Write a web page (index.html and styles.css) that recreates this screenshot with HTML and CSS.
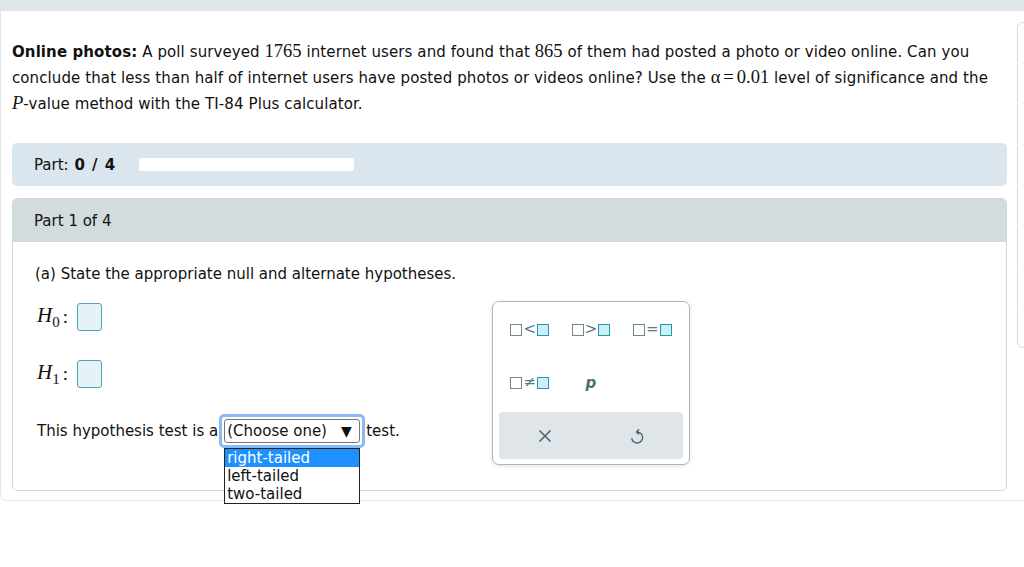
FILE: index.html
```html
<!DOCTYPE html>
<html>
<head>
<meta charset="utf-8">
<link rel="stylesheet" href="styles.css">
</head>
<body>
<div class="topbar"></div>
<div class="page">
  <div class="main">
    <p class="question"><b>Online photos:</b> A poll surveyed <span class="m">1765</span> internet users and found that <span class="m">865</span> of them had posted a photo or video online. Can you conclude that less than half of internet users have posted photos or videos online? Use the <span class="m">α<span class="eq">=</span>0.01</span> level of significance and the <span class="m i">P</span>-value method with the TI-84 Plus calculator.</p>

    <div class="partbar">
      <span>Part: <b>0 / 4</b></span>
      <div class="progress"></div>
    </div>

    <div class="partbox">
      <div class="parthead">Part 1 of 4</div>
      <div class="partbody">
        <div class="work">
          <p class="prompt">(a) State the appropriate null and alternate hypotheses.</p>
          <div class="hrow"><span class="hlabel"><span class="i">H</span><sub>0</sub></span><span class="colon">:</span><span class="ansbox"></span></div>
          <div class="hrow"><span class="hlabel"><span class="i">H</span><sub>1</sub></span><span class="colon">:</span><span class="ansbox"></span></div>
          <div class="testrow">
            <span>This hypothesis test is a</span>
            <span class="selectwrap">
              <span class="select">(Choose one) <span class="arrow">▼</span></span>
              <span class="options">
                <span class="opt sel">right-tailed</span>
                <span class="opt">left-tailed</span>
                <span class="opt">two-tailed</span>
              </span>
            </span>
            <span>test.</span>
          </div>
        </div>
        <div class="palette">
          <div class="keys">
            <span class="key"><span class="sq"></span><span class="op">&lt;</span><span class="sq f"></span></span>
            <span class="key"><span class="sq"></span><span class="op">&gt;</span><span class="sq f"></span></span>
            <span class="key"><span class="sq"></span><span class="op">=</span><span class="sq f"></span></span>
            <span class="key"><span class="sq"></span><span class="op">≠</span><span class="sq f"></span></span>
            <span class="key p">p</span>
            <span class="key"></span>
          </div>
          <div class="actions">
            <svg width="16" height="16" viewBox="0 0 16 16"><path d="M2.5 2.5 L13.5 13.5 M13.5 2.5 L2.5 13.5" stroke="#4b6570" stroke-width="1.6" fill="none"/></svg>
            <svg width="18" height="18" viewBox="0 0 18 18"><path d="M9 5 A5.5 5.5 0 1 1 3.7 11.2" stroke="#4b6570" stroke-width="1.4" fill="none"/><path d="M11 2.3 L8.5 5 L11 7.6" stroke="#4b6570" stroke-width="1.4" fill="none"/></svg>
          </div>
        </div>
      </div>
    </div>
  </div>
  <div class="side">
    <div></div><div></div><div></div><div></div><div></div><div></div><div></div><div></div>
  </div>
</div>
</body>
</html>
```
FILE: styles.css
```css
html, body { margin: 0; padding: 0; background: #fff; overflow: hidden; }
body { font-family: "DejaVu Sans", Verdana, sans-serif; font-size: 15px; color: #111; width: 1024px; height: 567px; }
.topbar { height: 11px; background: #dfe6e9; }
.page { display: flex; width: 1060px; height: 490px; border-left: 1px solid #e4e9eb; border-bottom: 1px solid #e4e9eb; border-bottom-left-radius: 6px; box-sizing: border-box; }
.main { width: 995px; padding-left: 11px; flex: none; }
.question { margin: 28px 0 0 0; line-height: 26px; width: 988px; letter-spacing: 0.1px; }
.m { font-family: "Liberation Serif", "DejaVu Serif", serif; font-size: 18.5px; line-height: 1; letter-spacing: 0; }
.i { font-style: italic; font-family: "Liberation Serif", serif; }
.eq { margin: 0 3px; }
.partbar { margin-top: 26px; height: 43px; background: #dae5ee; border-radius: 5px; display: flex; align-items: center; padding-left: 22px; }
.partbar b { font-weight: bold; word-spacing: 2px; margin-left: 1px; }
.progress { width: 215px; height: 13px; background: #fff; border-radius: 3px; margin-left: 24px; }
.partbox { margin-top: 12px; height: 293px; border: 1px solid #cdd8dc; border-radius: 5px; box-sizing: border-box; overflow: visible; }
.parthead { height: 43px; background: #d2dbde; display: flex; align-items: center; padding-left: 21px; border-radius: 4px 4px 0 0; }
.partbody { display: flex; }
.work { width: 457px; padding-left: 22px; flex: none; }
.prompt { margin: 22px 0 0 0; line-height: 20px; }
.hrow { display: flex; align-items: center; height: 30px; margin-top: 18px; }
.hrow + .hrow { margin-top: 27px; }
.hlabel { font-family: "Liberation Serif", serif; font-size: 21px; margin-left: 2px; line-height: 1; }
.hlabel sub { font-size: 15px; font-style: normal; vertical-align: -5px; }
.colon { font-family: "Liberation Serif", serif; font-size: 19px; margin-left: 3px; }
.ansbox { width: 23px; height: 26px; border: 1.5px solid #4fa3b3; background: #e5f3f8; border-radius: 3px; margin-left: 9px; }
.testrow { display: flex; align-items: center; margin-top: 25px; height: 34px; margin-left: 2px; }
.selectwrap { position: relative; margin: 0 1px 0 1px; border: 3px solid #8ab9f5; border-radius: 5px; padding: 2px; }
.select { display: flex; align-items: center; width: 132px; height: 22px; border: 1px solid #767676; border-radius: 3px; box-sizing: content-box; padding-left: 2px; font-size: 15px; background: #fff; }
.arrow { margin-left: 14px; font-size: 14px; }
.options { position: absolute; left: 2px; top: 31px; width: 134px; border: 1px solid #222; background: #fff; display: flex; flex-direction: column; z-index: 3; }
.opt { height: 18px; line-height: 18px; font-size: 15px; padding-left: 2px; }
.opt.sel { background: #1e90ff; color: #fff; }
.palette { margin-top: 59px; margin-left: 0; width: 198px; height: 164px; border: 1px solid #aab7bc; border-radius: 7px; box-shadow: 0 1px 4px rgba(0,0,0,0.12); box-sizing: border-box; display: flex; flex-direction: column; padding: 0 6px 5px 6px; flex: none; }
.keys { display: grid; grid-template-columns: repeat(3, 1fr); grid-auto-rows: 53px; padding-top: 1px; flex: 1; }
.key { display: flex; align-items: center; justify-content: center; color: #5d7781; }
.sq { width: 10px; height: 10px; border: 1.5px solid #6f8790; background: #fff; }
.sq.f { border-color: #1f9ab0; background: #cdeef5; }
.op { font-size: 15px; margin: 0 1px; line-height: 1; }
.key.p { font-weight: bold; font-style: italic; font-size: 15px; color: #4f6e79; }
.actions { height: 47px; background: #dfe5e8; border-radius: 4px; display: flex; justify-content: space-around; align-items: center; }
.side { margin-left: 10px; margin-top: 11px; width: 40px; height: 326px; border: 1px solid #d3dbde; border-radius: 6px; flex: none; box-sizing: border-box; display: flex; flex-direction: column; }
.side div { height: 40px; border-bottom: 1px solid #d7dee1; margin-left: 5px; }
.side div:last-child { border-bottom: none; }
```
